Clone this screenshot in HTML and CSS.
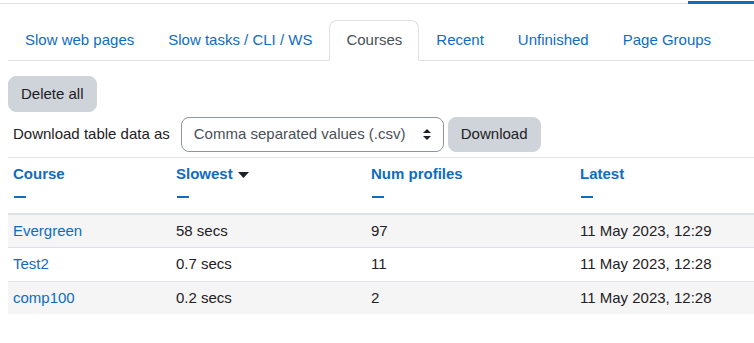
FILE: index.html
```html
<!DOCTYPE html>
<html lang="en">
<head>
  <meta charset="UTF-8">
  <title>Profiling - Courses</title>
  <link rel="stylesheet" href="styles.css">
</head>
<body>

<div class="ust-serit">
  <div class="gri-cizgi"></div>
  <div class="mavi-blok"></div>
</div>

<div class="sayfa">
  <ul class="sekmeler">
    <li><a href="#">Slow web pages</a></li>
    <li><a href="#">Slow tasks / CLI / WS</a></li>
    <li><a href="#" class="aktif">Courses</a></li>
    <li><a href="#">Recent</a></li>
    <li><a href="#">Unfinished</a></li>
    <li><a href="#">Page Groups</a></li>
  </ul>

  <button class="buton">Delete all</button>

  <form class="indir-formu">
    <label for="format">Download table data as</label>
    <div class="secim">
      <span>Comma separated values (.csv)</span>
      <svg width="8" height="11" viewBox="0 0 8 11">
        <path d="M4 0 L8 4 L0 4 Z M0 7 L8 7 L4 11 Z" fill="#1d2125"/>
      </svg>
    </div>
    <button type="button" class="buton">Download</button>
  </form>

  <table class="tablo">
    <thead>
      <tr>
        <th class="c0"><a href="#">Course</a><div class="cizgi"></div></th>
        <th class="c1"><a href="#">Slowest</a>
          <svg class="ok" width="11" height="6" viewBox="0 0 11 6"><path d="M0 0 H11 L5.5 6 Z" fill="#1d2125"/></svg>
          <div class="cizgi"></div></th>
        <th class="c2"><a href="#">Num profiles</a><div class="cizgi"></div></th>
        <th class="c3"><a href="#">Latest</a><div class="cizgi"></div></th>
      </tr>
    </thead>
    <tbody>
      <tr>
        <td><a href="#">Evergreen</a></td>
        <td>58 secs</td>
        <td>97</td>
        <td>11 May 2023, 12:29</td>
      </tr>
      <tr>
        <td><a href="#">Test2</a></td>
        <td>0.7 secs</td>
        <td>11</td>
        <td>11 May 2023, 12:28</td>
      </tr>
      <tr>
        <td><a href="#">comp100</a></td>
        <td>0.2 secs</td>
        <td>2</td>
        <td>11 May 2023, 12:28</td>
      </tr>
    </tbody>
  </table>
</div>

</body>
</html>
```

FILE: styles.css
```css
body {
  margin: 0;
  background-color: #fff;
  color: #1d2125;
  font-family: 'Liberation Sans', Arial, sans-serif;
  font-size: 15px;
  line-height: 1.5;
}

a {
  color: #0f6cbf;
  text-decoration: none;
}

.ust-serit {
  display: flex;
  align-items: flex-end;
  margin-top: 1px;
  height: 3px;
}

.gri-cizgi {
  flex: 1;
  height: 1px;
  background-color: #dee2e6;
}

.mavi-blok {
  width: 66px;
  height: 3px;
  background-color: #0f6cbf;
}

.sayfa {
  padding-left: 8px;
  padding-top: 16px;
}

.sekmeler {
  display: flex;
  list-style: none;
  margin: 0 0 15px 0;
  padding: 0;
  border-bottom: 1px solid #dee2e6;
}

.sekmeler li {
  margin-bottom: -1px;
}

.sekmeler a {
  display: block;
  padding: 8px 16px;
  border: 1px solid transparent;
  border-top-left-radius: 8px;
  border-top-right-radius: 8px;
}

.sekmeler a.aktif {
  color: #495057;
  background-color: #fff;
  border-color: #dee2e6 #dee2e6 #fff;
}

.buton {
  font-family: inherit;
  font-size: 15px;
  line-height: 1.5;
  color: #1d2125;
  background-color: #ced4da;
  border: 1px solid #ced4da;
  border-radius: 8px;
  padding: 6px 12px;
  cursor: pointer;
}

.indir-formu {
  display: flex;
  align-items: center;
  height: 35px;
  margin: 5px 0 5px 5px;
}

.indir-formu label {
  margin-right: 11px;
}

.indir-formu .buton {
  height: 35px;
  padding-top: 0;
  padding-bottom: 0;
}

.secim {
  display: flex;
  align-items: center;
  justify-content: space-between;
  box-sizing: border-box;
  width: 263px;
  height: 35px;
  padding: 0 12px;
  border: 1px solid #8f959e;
  border-radius: 8px;
  color: #495057;
  margin-right: 4px;
}

.tablo {
  width: 746px;
  border-collapse: collapse;
  border-top: 1px solid #dee2e6;
}

.tablo th,
.tablo td {
  text-align: left;
  padding: 5px;
  vertical-align: top;
}

.tablo th {
  font-weight: bold;
  border-bottom: 2px solid #dee2e6;
}

.tablo td {
  border-top: 1px solid #dee2e6;
}

.tablo tbody tr:first-child td {
  border-top: none;
}

.tablo tbody tr:nth-child(odd) {
  background-color: #f5f5f5;
}

.c0 { width: 153px; }
.c1 { width: 185px; }
.c2 { width: 199px; }

.ok {
  margin-left: 1px;
  vertical-align: middle;
}

.cizgi {
  width: 12px;
  height: 2px;
  background-color: #0f6cbf;
  margin: 10px 0 10px 1px;
}
```
